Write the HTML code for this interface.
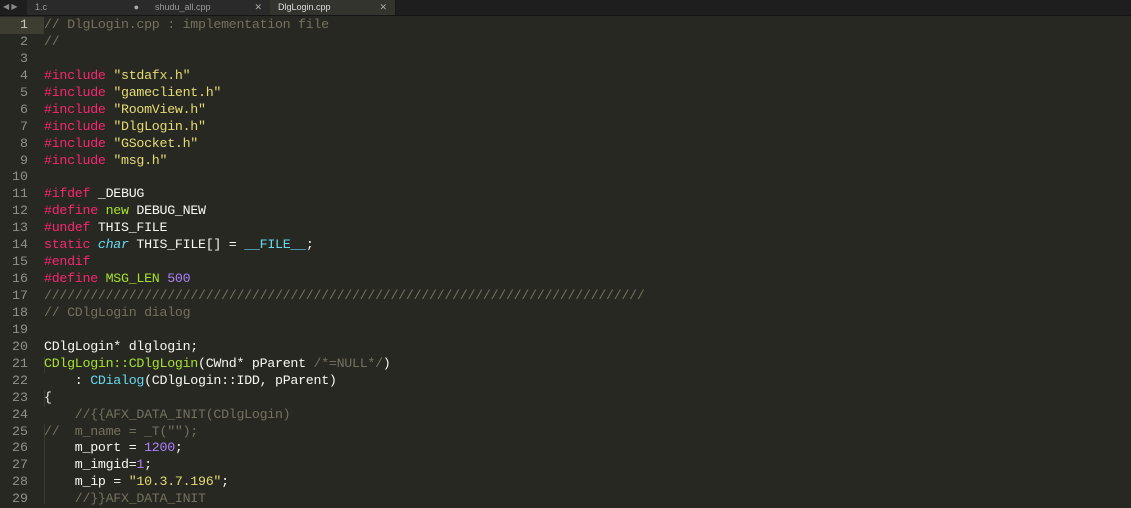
<!DOCTYPE html>
<html><head><meta charset="utf-8"><style>
html,body{margin:0;padding:0;width:1131px;height:500px;overflow:hidden;background:#272822;}
#tabs{position:absolute;left:0;top:0;width:1131px;height:15px;background:#1e1e1e;border-bottom:1px solid #151515;font-family:"Liberation Sans",sans-serif;font-size:9px;color:#9a9a9a;}
.tab{position:absolute;top:0;height:15px;line-height:14px;background:#2a2a2a;border-right:1px solid #1a1a1a;}
.tab span{position:absolute;left:8px;}
.tab i{position:absolute;right:8px;font-style:normal;font-size:9px;color:#aaa;}
.act{background:#33342e;color:#ddd;}
#code{position:absolute;left:0;top:17px;width:1131px;font-family:"Liberation Mono",monospace;font-size:13.3px;letter-spacing:-0.28px;}
.l{height:16.95px;line-height:16.95px;white-space:pre;position:relative;}
.n{display:inline-block;width:28px;text-align:right;color:#90918b;padding-right:16px;letter-spacing:0;}
.cur .n{background:#3e3d32;color:#c8c8c0;}
.t{color:#f8f8f2;}
.c{color:#75715e}.p{color:#f92672}.s{color:#e6db74}.g{color:#a6e22e}.b{color:#66d9ef}.bi{color:#66d9ef;font-style:italic}.v{color:#ae81ff}
.guide{position:absolute;left:44px;width:1px;background:#3b3a32;}
</style></head><body>
<div id="tabs">
<div style="position:absolute;left:3px;top:2px;color:#888;font-size:8px">◀ ▶</div>
<div class="tab" style="left:27px;width:120px"><span>1.c</span><i>●</i></div>
<div class="tab" style="left:147px;width:123px"><span>shudu_all.cpp</span><i>✕</i></div>
<div class="tab act" style="left:270px;width:125px"><span>DlgLogin.cpp</span><i>✕</i></div>
</div>
<div id="code">
<div class="guide" style="top:339px;height:17px"></div>
<div class="guide" style="top:373px;height:17px"></div>
<div class="guide" style="top:407px;height:80px"></div>
<div class="l cur"><span class="n">1</span><span class="c">// DlgLogin.cpp : implementation file</span></div>
<div class="l"><span class="n">2</span><span class="c">//</span></div>
<div class="l"><span class="n">3</span></div>
<div class="l"><span class="n">4</span><span class="p">#include</span> <span class="s">"stdafx.h"</span></div>
<div class="l"><span class="n">5</span><span class="p">#include</span> <span class="s">"gameclient.h"</span></div>
<div class="l"><span class="n">6</span><span class="p">#include</span> <span class="s">"RoomView.h"</span></div>
<div class="l"><span class="n">7</span><span class="p">#include</span> <span class="s">"DlgLogin.h"</span></div>
<div class="l"><span class="n">8</span><span class="p">#include</span> <span class="s">"GSocket.h"</span></div>
<div class="l"><span class="n">9</span><span class="p">#include</span> <span class="s">"msg.h"</span></div>
<div class="l"><span class="n">10</span></div>
<div class="l"><span class="n">11</span><span class="p">#ifdef</span><span class="t"> _DEBUG</span></div>
<div class="l"><span class="n">12</span><span class="p">#define</span> <span class="g">new</span><span class="t"> DEBUG_NEW</span></div>
<div class="l"><span class="n">13</span><span class="p">#undef</span><span class="t"> THIS_FILE</span></div>
<div class="l"><span class="n">14</span><span class="p">static</span> <span class="bi">char</span><span class="t"> THIS_FILE[] = </span><span class="b">__FILE__</span><span class="t">;</span></div>
<div class="l"><span class="n">15</span><span class="p">#endif</span></div>
<div class="l"><span class="n">16</span><span class="p">#define</span> <span class="g">MSG_LEN</span> <span class="v">500</span></div>
<div class="l"><span class="n">17</span><span class="c">//////////////////////////////////////////////////////////////////////////////</span></div>
<div class="l"><span class="n">18</span><span class="c">// CDlgLogin dialog</span></div>
<div class="l"><span class="n">19</span></div>
<div class="l"><span class="n">20</span><span class="t">CDlgLogin* dlglogin;</span></div>
<div class="l"><span class="n">21</span><span class="g">CDlgLogin::CDlgLogin</span><span class="t">(CWnd* pParent </span><span class="c">/*=NULL*/</span><span class="t">)</span></div>
<div class="l"><span class="n">22</span><span class="t">    : </span><span class="b">CDialog</span><span class="t">(CDlgLogin::IDD, pParent)</span></div>
<div class="l"><span class="n">23</span><span class="t">{</span></div>
<div class="l"><span class="n">24</span><span class="c">    //{{AFX_DATA_INIT(CDlgLogin)</span></div>
<div class="l"><span class="n">25</span><span class="c">//  m_name = _T("");</span></div>
<div class="l"><span class="n">26</span><span class="t">    m_port = </span><span class="v">1200</span><span class="t">;</span></div>
<div class="l"><span class="n">27</span><span class="t">    m_imgid=</span><span class="v">1</span><span class="t">;</span></div>
<div class="l"><span class="n">28</span><span class="t">    m_ip = </span><span class="s">"10.3.7.196"</span><span class="t">;</span></div>
<div class="l"><span class="n">29</span><span class="c">    //}}AFX_DATA_INIT</span></div>
</div>
</body></html>
